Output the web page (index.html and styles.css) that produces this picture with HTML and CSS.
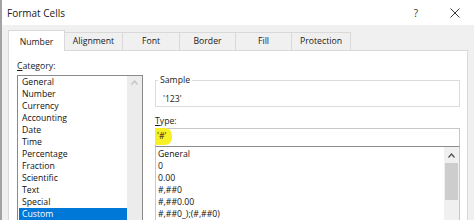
FILE: index.html
```html
<!DOCTYPE html>
<html lang="en">
<head>
    <meta charset="UTF-8">
    <title>Format Cells</title>
    <link rel="stylesheet" href="styles.css">
</head>
<body>
    <div class="window">
        <div class="titlebar">
            <span class="title">Format Cells</span>
            <span class="help">?</span>
            <span class="close">
                <svg width="10" height="10" viewBox="0 0 10 10"><path d="M0.5 0.5 L9.5 9.5 M9.5 0.5 L0.5 9.5" stroke="#3a3a3a" stroke-width="1" fill="none"/></svg>
            </span>
        </div>

        <div class="dialog">
            <div class="tabs">
                <div class="tab active" style="width: 57px">Number</div>
                <div class="tab" style="width: 59px">Alignment</div>
                <div class="tab" style="width: 58px">Font</div>
                <div class="tab" style="width: 57px">Border</div>
                <div class="tab" style="width: 57px">Fill</div>
                <div class="tab" style="width: 60px">Protection</div>
            </div>

            <div class="panel">
                <div class="cat-col">
                    <div class="label"><u>C</u>ategory:</div>
                    <div class="listbox cat-list">
                        <ul class="items">
                            <li>General</li>
                            <li>Number</li>
                            <li>Currency</li>
                            <li>Accounting</li>
                            <li>Date</li>
                            <li>Time</li>
                            <li>Percentage</li>
                            <li>Fraction</li>
                            <li>Scientific</li>
                            <li>Text</li>
                            <li>Special</li>
                            <li class="selected">Custom</li>
                        </ul>
                        <div class="scrollbar disabled">
                            <div class="arrow">
                                <svg width="7" height="5" viewBox="0 0 7 5"><path d="M0.5 4.5 L3.5 1 L6.5 4.5" stroke="#c2c2c2" stroke-width="1.2" fill="none"/></svg>
                            </div>
                        </div>
                    </div>
                </div>

                <div class="type-col">
                    <fieldset class="sample">
                        <legend>Sample</legend>
                        <div class="sample-value">'123'</div>
                    </fieldset>

                    <div class="label type-label"><u>T</u>ype:</div>
                    <div class="type-input"><span class="marker">'#'</span></div>

                    <div class="listbox type-list">
                        <ul class="items">
                            <li>General</li>
                            <li>0</li>
                            <li>0.00</li>
                            <li>#,##0</li>
                            <li>#,##0.00</li>
                            <li>#,##0_);(#,##0)</li>
                        </ul>
                        <div class="scrollbar">
                            <div class="arrow">
                                <svg width="7" height="5" viewBox="0 0 7 5"><path d="M0.5 4.5 L3.5 1 L6.5 4.5" stroke="#505050" stroke-width="1.2" fill="none"/></svg>
                            </div>
                            <div class="thumb"></div>
                        </div>
                    </div>
                </div>
            </div>
        </div>
    </div>
</body>
</html>
```

FILE: styles.css
```css
body {
    margin: 0;
    padding: 0;
    font-family: 'Open Sans', 'Noto Sans', sans-serif;
    color: #1a1a1a;
    background-color: #f0f0f0;
}
.window {
    width: 474px;
    height: 220px;
    overflow: hidden;
    box-sizing: border-box;
    border-left: 2px solid #a3a3a3;
    background-color: #f0f0f0;
}

/* Title bar */
.titlebar {
    height: 25px;
    display: flex;
    align-items: center;
    background-color: #fff;
}
.title {
    font-size: 10px;
    margin-left: 5px;
    flex: 1;
}
.help {
    font-size: 10px;
    color: #333;
    margin-right: 32px;
}
.close {
    display: flex;
    margin-right: 14px;
}

/* Tabs */
.dialog {
    padding: 5px 6px 0 6px;
}
.tabs {
    display: flex;
    align-items: flex-end;
    height: 20px;
}
.tab {
    box-sizing: border-box;
    height: 18px;
    font-size: 8.7px;
    line-height: 17px;
    text-align: center;
    border: 1px solid #d9d9d9;
    border-bottom: none;
    margin-right: -1px;
    background-color: #f0f0f0;
}
.tab.active {
    height: 21px;
    margin-bottom: -1px;
    background-color: #fff;
    position: relative;
    z-index: 1;
    line-height: 22px;
}

/* Panel */
.panel {
    display: grid;
    grid-template-columns: 126px 305px;
    column-gap: 12px;
    align-items: start;
    height: 200px;
    padding: 9px 0 0 8px;
    background-color: #fff;
    border: 1px solid #d9d9d9;
    font-size: 8.7px;
}
.label {
    line-height: 12px;
}
.label u {
    text-decoration-thickness: 1px;
    text-underline-offset: 1px;
}

/* List boxes */
.listbox {
    display: flex;
    box-sizing: border-box;
    background-color: #fff;
}
.items {
    flex: 1;
    list-style: none;
    margin: 0;
    padding: 0;
    line-height: 12px;
    color: #111;
}
.scrollbar {
    width: 15px;
    display: flex;
    flex-direction: column;
    background-color: #f0f0f0;
}
.arrow {
    height: 16px;
    display: flex;
    justify-content: center;
    align-items: center;
}
.thumb {
    height: 37px;
    margin: 0 1px;
    background-color: #cdcdcd;
}
.scrollbar.disabled {
    background-color: #ececec;
}
.scrollbar.disabled .arrow {
    height: 13px;
}

.cat-list {
    margin-top: 3px;
    height: 160px;
    border: 1px solid #8a8a8a;
}
.cat-list .items li {
    padding-left: 3px;
    margin-left: 1px;
}
.cat-list .items li.selected {
    background-color: #0078d7;
    color: #fff;
}

/* Sample / Type */
.type-col {
    padding-top: 14px;
}
.sample {
    margin: 0;
    padding: 0 0 1px 7px;
    min-inline-size: 0;
    border: 1px solid #dcdcdc;
}
.sample legend {
    padding: 0 2px;
    margin-left: -5px;
    line-height: 12px;
}
.sample-value {
    padding-top: 7px;
    line-height: 12px;
}
.type-label {
    margin-top: 8px;
}
.type-input {
    margin-top: 1px;
    height: 18px;
    box-sizing: border-box;
    border: 1px solid #c8c8c8;
    border-bottom: none;
}
.marker {
    display: inline-block;
    height: 17px;
    line-height: 16px;
    padding: 0 6px 0 2px;
    margin-left: -1px;
    margin-top: -1px;
    background-color: #f7f025;
    border-radius: 0 7px 7px 0;
}
.type-list {
    height: 80px;
    border: 1px solid #c8c8c8;
    border-top-color: #8c8c8c;
}
.type-list .items {
    padding: 1px 0 0 2px;
}
```
